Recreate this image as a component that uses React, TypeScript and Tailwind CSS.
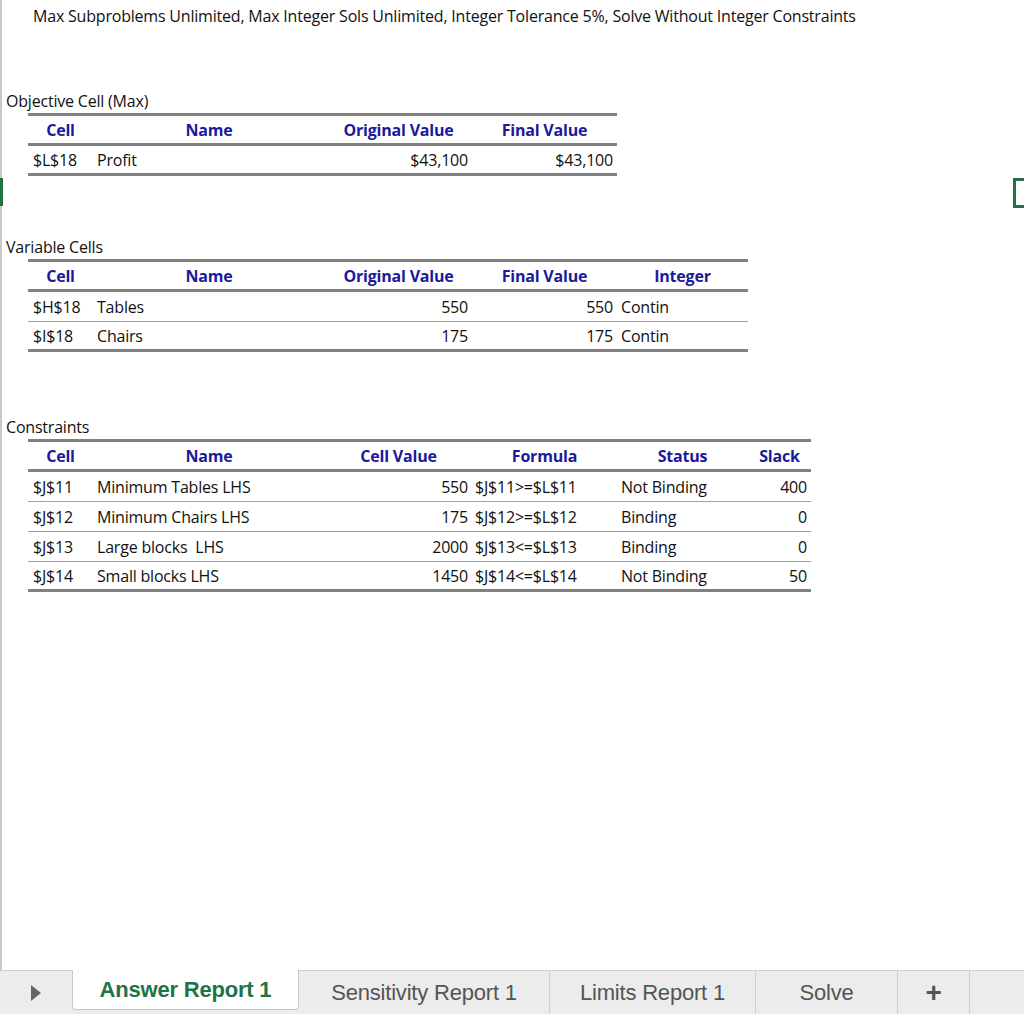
import React from "react"

const hdr = "text-[#1a1a9c] font-bold text-center"
const thick = "border-[#808080] border-b-[3px]"

function Row({ cells, className = "" }: { cells: [string, string][]; className?: string }) {
  return (
    <div className={`flex h-[30px] items-center whitespace-nowrap ${className}`}>
      {cells.map(([w, t], i) => (
        <div key={i} className={w}>
          {t}
        </div>
      ))}
    </div>
  )
}

export default function App() {
  const W = { cell: "w-[65px]", name: "w-[232px]", a: "w-[147px]", b: "w-[145px]", c: "w-[131px]", d: "w-[63px]" }
  return (
    <div className="w-[1024px] h-[1014px] bg-white flex flex-col text-[16px] tracking-[-0.2px] text-[#111]" style={{ fontFamily: "'Open Sans', 'Noto Sans', sans-serif" }}>
      <div className="flex-1 relative border-l-2 border-[#c8c8c8]">
        <div className="absolute left-[-2px] top-[178px] w-[3px] h-[28px] bg-[#217346]" />
        <div className="absolute left-[1011px] top-[178px] w-[12px] h-[30px] border-[3px] border-r-0 border-[#217346]" />
        <div className="h-[32px] flex items-center pl-[31px] whitespace-nowrap">
          Max Subproblems Unlimited, Max Integer Sols Unlimited, Integer Tolerance 5%, Solve Without Integer Constraints
        </div>

        <div className="mt-[57px] pl-[4px]">Objective Cell (Max)</div>
        <div className="ml-[26px] w-[589px] border-t-[3px] border-[#808080]">
          <Row className={thick} cells={[[`${W.cell} ${hdr}`, "Cell"], [`${W.name} ${hdr}`, "Name"], [`${W.a} ${hdr}`, "Original Value"], [`${W.b} ${hdr}`, "Final Value"]]} />
          <Row className={thick} cells={[[`${W.cell} pl-[5px]`, "$L$18"], [`${W.name} pl-[4px]`, "Profit"], [`${W.a} text-right pr-[4px]`, "$43,100"], [`${W.b} text-right pr-[4px]`, "$43,100"]]} />
        </div>

        <div className="mt-[59px] pl-[4px]">Variable Cells</div>
        <div className="ml-[26px] w-[720px] border-t-[3px] border-[#808080]">
          <Row className={thick} cells={[[`${W.cell} ${hdr}`, "Cell"], [`${W.name} ${hdr}`, "Name"], [`${W.a} ${hdr}`, "Original Value"], [`${W.b} ${hdr}`, "Final Value"], [`${W.c} ${hdr}`, "Integer"]]} />
          {[["$H$18", "Tables", "550"], ["$I$18", "Chairs", "175"]].map((r, i) => (
            <Row key={i} className={i === 1 ? thick : "border-b border-[#a0a0a0]"} cells={[[`${W.cell} pl-[5px]`, r[0]], [`${W.name} pl-[4px]`, r[1]], [`${W.a} text-right pr-[4px]`, r[2]], [`${W.b} text-right pr-[4px]`, r[2]], [`${W.c} pl-[4px]`, "Contin"]]} />
          ))}
        </div>

        <div className="mt-[63px] pl-[4px]">Constraints</div>
        <div className="ml-[26px] w-[783px] border-t-[3px] border-[#808080]">
          <Row className={thick} cells={[[`${W.cell} ${hdr}`, "Cell"], [`${W.name} ${hdr}`, "Name"], [`${W.a} ${hdr}`, "Cell Value"], [`${W.b} ${hdr}`, "Formula"], [`${W.c} ${hdr}`, "Status"], [`${W.d} ${hdr}`, "Slack"]]} />
          {[
            ["$J$11", "Minimum Tables LHS", "550", "$J$11>=$L$11", "Not Binding", "400"],
            ["$J$12", "Minimum Chairs LHS", "175", "$J$12>=$L$12", "Binding", "0"],
            ["$J$13", "Large blocks  LHS", "2000", "$J$13<=$L$13", "Binding", "0"],
            ["$J$14", "Small blocks LHS", "1450", "$J$14<=$L$14", "Not Binding", "50"],
          ].map((r, i) => (
            <Row key={i} className={`h-[29px] ${i === 3 ? thick : "border-b border-[#a0a0a0]"}`} cells={[[`${W.cell} pl-[5px]`, r[0]], [`${W.name} pl-[4px] whitespace-pre`, r[1]], [`${W.a} text-right pr-[4px]`, r[2]], [`${W.b} pl-[3px]`, r[3]], [`${W.c} pl-[4px]`, r[4]], [`${W.d} text-right pr-[4px]`, r[5]]]} />
          ))}
        </div>
      </div>

      <div className="h-[44px] bg-[#ececec] border-t border-[#d0d0d0] flex text-[22px] text-[#555]" style={{ fontFamily: "'Liberation Sans', Arial, sans-serif" }}>
        <div className="w-[72px] flex items-center justify-center">
          <svg width="12" height="18" viewBox="0 0 12 18"><path d="M1 1 L11 9 L1 17 Z" fill="#666" /></svg>
        </div>
        <div className="w-[227px] -mt-px bg-white border-x border-b border-[#c8c8c8] rounded-b flex items-center justify-center text-[#217346] font-bold mb-[4px]">Answer Report 1</div>
        <div className="w-[251px] border-r border-[#d0d0d0] flex items-center justify-center">Sensitivity Report 1</div>
        <div className="w-[206px] border-r border-[#d0d0d0] flex items-center justify-center">Limits Report 1</div>
        <div className="w-[142px] border-r border-[#d0d0d0] flex items-center justify-center">Solve</div>
        <div className="w-[72px] border-r border-[#d0d0d0] flex items-center justify-center text-[28px] font-bold">+</div>
      </div>
    </div>
  )
}
